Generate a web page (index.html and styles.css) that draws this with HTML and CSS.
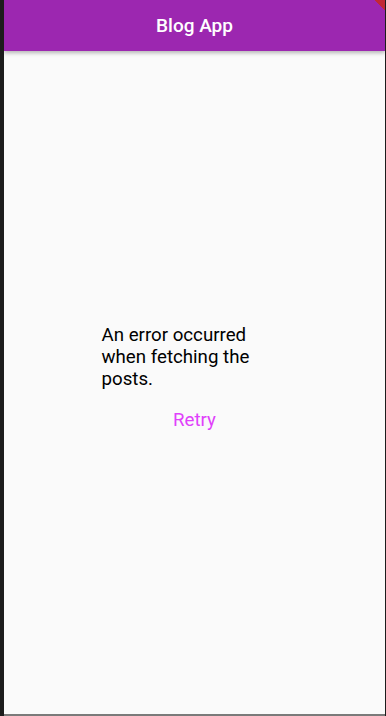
FILE: index.html
```html
<!DOCTYPE html>
<html lang="en">
<head>
<meta charset="utf-8">
<title>Blog App</title>
<link rel="stylesheet" href="styles.css">
</head>
<body>
<div class="screen">
  <header class="appbar">
    <h1 class="title">Blog App</h1>
    <div class="debug-corner"></div>
  </header>
  <main class="content">
    <div class="error">
      <p class="message">An error occurred when fetching the posts.</p>
      <button class="retry" type="button">Retry</button>
    </div>
  </main>
</div>
</body>
</html>
```

FILE: styles.css
```css
html, body {
  margin: 0;
  padding: 0;
  height: 100%;
}
body {
  background: #1c1c1c;
  font-family: Roboto, "Liberation Sans", sans-serif;
}
.screen {
  box-sizing: border-box;
  height: 716px;
  margin: 0 1px 0 4px;
  border-bottom: 2px solid #7a7a7a;
  background: #fafafa;
  display: flex;
  flex-direction: column;
  overflow: hidden;
}
.appbar {
  position: relative;
  height: 51px;
  flex: 0 0 51px;
  background: #9c27b0;
  box-shadow: 0 2px 4px rgba(0, 0, 0, 0.28);
  display: flex;
  align-items: center;
  justify-content: center;
  z-index: 1;
}
.title {
  margin: 0;
  color: #ffffff;
  font-size: 19px;
  font-weight: 500;
  letter-spacing: 0;
}
.debug-corner {
  position: absolute;
  top: 0;
  right: 0;
  width: 14px;
  height: 14px;
  background: linear-gradient(225deg, rgba(198, 40, 40, 0.9) 0, rgba(198, 40, 40, 0.9) 38%, transparent 38%);
}
.content {
  flex: 1;
  display: flex;
  align-items: center;
  justify-content: center;
}
.error {
  width: 186px;
  display: flex;
  flex-direction: column;
  align-items: center;
  margin-top: 2px;
}
.message {
  margin: 0;
  width: 100%;
  font-size: 18.7px;
  line-height: 22px;
  color: #000000;
}
.retry {
  margin-top: 6px;
  height: 48px;
  padding: 0 16px;
  border: none;
  background: transparent;
  color: #e040fb;
  font-family: Roboto, "Liberation Sans", sans-serif;
  font-size: 18.7px;
}
```
